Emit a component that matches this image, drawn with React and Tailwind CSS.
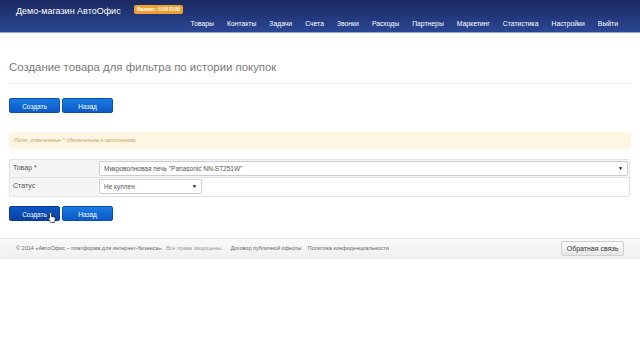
export default function App() {
  const nav = ["Товары", "Контакты", "Задачи", "Счета", "Звонки", "Расходы", "Партнеры", "Маркетинг", "Статистика", "Настройки", "Выйти"];
  return (
    <div className="w-[640px] h-[360px] bg-white overflow-hidden" style={{ fontFamily: '"Liberation Sans", Arial, sans-serif' }}>
      <div className="h-[33px] bg-gradient-to-b from-[#1a2960] to-[#2a4795] border-b border-[#8fa3d6] relative">
        <div className="absolute left-[16px] top-[5px] text-[9px] text-white">Демо-магазин АвтоОфис</div>
        <div className="absolute left-[134px] top-[5px] h-[9px] px-[3px] bg-[#f0a030] rounded-[2px] text-[5px] leading-[9px] font-bold text-white">Баланс: 0.00 RUB</div>
        <div className="absolute right-[22px] top-[19px] flex gap-[13px] text-[6.8px] text-white">
          {nav.map((n) => (
            <span key={n}>{n}</span>
          ))}
        </div>
      </div>
      <div className="px-[9px]">
        <div className="pt-[26px] pb-[7px] border-b border-[#eeeeee] text-[11.4px] text-[#7a7a7a]">Создание товара для фильтра по истории покупок</div>
        <div className="flex gap-[2px] mt-[14px]">
          <Btn>Создать</Btn>
          <Btn>Назад</Btn>
        </div>
        <div className="mt-[19px] h-[17px] bg-[#fcf6e2] rounded-[2px] pl-[5px] text-[5.5px] leading-[17px] text-[#c8a56a]">
          Поля, отмеченные * обязательны к заполнению.
        </div>
        <div className="mt-[10px] border border-[#e3e3e3] rounded-[2px] w-[621px]">
          <div className="flex h-[18px] border-b border-[#e3e3e3]">
            <div className="w-[88px] bg-[#f4f4f4] pl-[3px] text-[7px] leading-[15px] text-[#555]">Товар *</div>
            <div className="flex-1 px-[1px] py-[1px] bg-[#f4f4f4]">
              <div className="h-[15px] bg-white border border-[#cccccc] rounded-[2px] flex items-center justify-between px-[4px] text-[6.5px] text-[#555]">
                <span>Микроволновая печь "Panasonic NN-ST251W"</span>
                <span className="text-[5px] text-black">▼</span>
              </div>
            </div>
          </div>
          <div className="flex h-[18px]">
            <div className="w-[88px] bg-[#f4f4f4] pl-[3px] text-[7px] leading-[15px] text-[#555]">Статус</div>
            <div className="flex-1 px-[1px] py-[1px] bg-white">
              <div className="h-[15px] w-[103px] bg-white border border-[#cccccc] rounded-[2px] flex items-center justify-between px-[4px] text-[6.5px] text-[#555]">
                <span>Не куплен</span>
                <span className="text-[5px] text-black">▼</span>
              </div>
            </div>
          </div>
        </div>
        <div className="flex gap-[2px] mt-[9px]">
          <Btn dark>
            <span className="relative">
              Создать
              <svg className="absolute left-[26px] top-[1px]" width="8" height="11" viewBox="0 0 8 11">
                <path d="M2.5 0.5 C3.3 0.5 3.5 1 3.5 1.5 L3.5 4.5 L6 5 C7 5.2 7.5 5.7 7.3 6.6 L6.8 9 L6.5 10.5 L2.8 10.5 L0.6 7 C0.3 6.4 1 5.8 1.6 6.3 L1.5 1.5 C1.5 1 1.8 0.5 2.5 0.5 Z" fill="white" stroke="black" strokeWidth="0.6" />
              </svg>
            </span>
          </Btn>
          <Btn>Назад</Btn>
        </div>
      </div>
      <div className="mt-[17px] h-[21px] bg-gradient-to-b from-[#f9f9f9] to-[#f0f0f0] border-t border-[#e2e2e2] border-b border-b-[#e8e8e8] flex items-center px-[16px] text-[5.5px] text-[#666]">
        <span>© 2014 «АвтоОфис – платформа для интернет-бизнеса».</span>
        <span className="ml-[3px] text-[#999]">Все права защищены.</span>
        <span className="ml-[8px]">Договор публичной оферты</span>
        <span className="ml-[6px]">Политика конфиденциальности</span>
        <div className="ml-auto mr-[0px] h-[15px] w-[63px] bg-gradient-to-b from-[#fdfdfd] to-[#e6e6e6] border border-[#cfcfcf] rounded-[2px] text-[7px] leading-[13px] text-center text-[#333]">
          Обратная связь
        </div>
      </div>
    </div>
  );
}

function Btn({ children, dark }) {
  return (
    <div
      className={
        "w-[51px] h-[15px] rounded-[2px] text-white text-[6.5px] leading-[15px] text-center border " +
        (dark
          ? "bg-gradient-to-b from-[#0b55c4] to-[#0a42a3] border-[#083c8f]"
          : "bg-gradient-to-b from-[#1b7ae0] to-[#0c5ac9] border-[#0a4fb0]")
      }
    >
      {children}
    </div>
  );
}
